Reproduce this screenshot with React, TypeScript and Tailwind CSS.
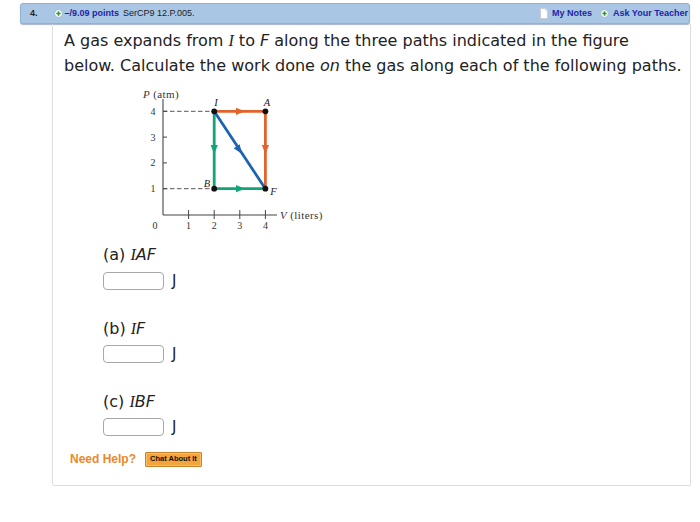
import React from "react";

const GreenPlus = () => (
  <span className="inline-flex items-center justify-center w-[9px] h-[9px] rounded-full bg-white border border-[#9bb7d2] shrink-0">
    <svg width="5" height="5" viewBox="0 0 5 5">
      <path d="M2.5 0.3 V4.7 M0.3 2.5 H4.7" stroke="#2e9a2e" strokeWidth="1.6" />
    </svg>
  </span>
);

const DocIcon = () => (
  <svg width="8" height="11" viewBox="0 0 8 11" className="shrink-0">
    <path d="M0.5 0.5 H5.5 L7.5 2.5 V10.5 H0.5 Z" fill="#fff" stroke="#c9c9c9" strokeWidth="0.8" />
    <path d="M5.5 0.5 V2.5 H7.5" fill="#eee" stroke="#c9c9c9" strokeWidth="0.6" />
  </svg>
);

const Figure = () => {
  const X = (v: number) => 32 + 25.6 * v;
  const Y = (p: number) => 130.5 - 25.8 * p;
  const orange = "#e2632b";
  const green = "#14a47a";
  const blue = "#1c63b0";
  const serif = "'Liberation Serif', 'DejaVu Serif', serif";
  const bAng = (Math.atan2(Y(1) - Y(4), X(4) - X(2)) * 180) / Math.PI;
  return (
    <svg width="200" height="150" viewBox="0 0 200 150" className="block">
      <line x1={32} y1={Y(4)} x2={X(2)} y2={Y(4)} stroke="#555" strokeWidth="1" strokeDasharray="4.5 2.5" />
      <line x1={32} y1={Y(1)} x2={X(2)} y2={Y(1)} stroke="#555" strokeWidth="1" strokeDasharray="4.5 2.5" />
      <line x1={32} y1={15} x2={32} y2={131} stroke="#444" strokeWidth="1.1" />
      <line x1={32} y1={131} x2={146} y2={131} stroke="#444" strokeWidth="1.1" />
      {[1, 2, 3, 4].map((p) => (
        <line key={"yt" + p} x1={32} y1={Y(p)} x2={36} y2={Y(p)} stroke="#444" strokeWidth="1" />
      ))}
      {[1, 2, 3, 4].map((v) => (
        <line key={"xt" + v} x1={X(v)} y1={126} x2={X(v)} y2={135} stroke="#444" strokeWidth="1" />
      ))}
      <text x={12} y={13.5} fontFamily={serif} fontSize="11" letterSpacing="0.4" fill="#333">
        <tspan fontStyle="italic">P</tspan> (atm)
      </text>
      {[1, 2, 3, 4].map((p) => (
        <text key={"yl" + p} x={22} y={Y(p) + 3.5} fontFamily={serif} fontSize="10" fill="#333" textAnchor="middle">
          {p}
        </text>
      ))}
      {[0, 1, 2, 3, 4].map((v) => (
        <text key={"xl" + v} x={v === 0 ? 24 : X(v)} y={144.5} fontFamily={serif} fontSize="10" fill="#333" textAnchor="middle">
          {v}
        </text>
      ))}
      <text x={149} y={135} fontFamily={serif} fontSize="11" letterSpacing="0.4" fill="#333">
        <tspan fontStyle="italic">V</tspan> (liters)
      </text>
      <polyline points={`${X(2)},${Y(4)} ${X(4)},${Y(4)} ${X(4)},${Y(1)}`} fill="none" stroke={orange} strokeWidth="2.8" />
      <polyline points={`${X(2)},${Y(4)} ${X(2)},${Y(1)} ${X(4)},${Y(1)}`} fill="none" stroke={green} strokeWidth="2.8" />
      <line x1={X(2)} y1={Y(4)} x2={X(4)} y2={Y(1)} stroke={blue} strokeWidth="2.8" />
      <polygon points="-5,-3.6 4,0 -5,3.6" fill={orange} transform={`translate(110,${Y(4)})`} />
      <polygon points="-5,-3.6 4,0 -5,3.6" fill={orange} transform={`translate(${X(4)},66) rotate(90)`} />
      <polygon points="-5,-3.6 4,0 -5,3.6" fill={green} transform={`translate(${X(2)},66) rotate(90)`} />
      <polygon points="-5,-3.6 4,0 -5,3.6" fill={green} transform={`translate(110,${Y(1)})`} />
      <polygon points="-5,-3.6 4,0 -5,3.6" fill={blue} transform={`translate(108.5,66.5) rotate(${bAng})`} />
      {[
        [X(2), Y(4)],
        [X(4), Y(4)],
        [X(2), Y(1)],
        [X(4), Y(1)],
      ].map(([cx, cy], i) => (
        <circle key={"pt" + i} cx={cx} cy={cy} r={2.9} fill="#111" />
      ))}
      <text x={85} y={21.5} fontFamily={serif} fontStyle="italic" fontSize="10.5" fill="#222" textAnchor="middle">I</text>
      <text x={136} y={21.5} fontFamily={serif} fontStyle="italic" fontSize="10.5" fill="#222" textAnchor="middle">A</text>
      <text x={76} y={103} fontFamily={serif} fontStyle="italic" fontSize="10.5" fill="#222" textAnchor="middle">B</text>
      <text x={142.5} y={110.5} fontFamily={serif} fontStyle="italic" fontSize="10.5" fill="#222" textAnchor="middle">F</text>
    </svg>
  );
};

const SerifI = () => (
  <span className="italic" style={{ fontFamily: "'Liberation Serif', 'DejaVu Serif', serif" }}>I</span>
);

const Answer = () => (
  <div className="flex items-center">
    <div className="w-[61px] h-[18px] rounded-[4px] border border-[#a8a8a8] bg-white" />
    <span className="ml-[8px] text-[15px] leading-[18px] text-[#222]">J</span>
  </div>
);

export default function App() {
  return (
    <div
      className="w-[700px] h-[522px] bg-white pt-[3px] pl-[20px]"
      style={{ fontFamily: "'DejaVu Sans', Verdana, sans-serif" }}
    >
      <div
        className="w-[670px] h-[21px] rounded-[3px] bg-[#a9c6e4] border border-[#8fb1d4] shadow-[0_1px_1px_rgba(60,90,130,0.45)] flex items-center text-[9px] leading-none"
        style={{ fontFamily: "'Liberation Sans', Arial, sans-serif" }}
      >
        <span className="ml-[9px] font-bold text-[#222]">4.</span>
        <span className="ml-[16px]"><GreenPlus /></span>
        <span className="ml-[2px] font-bold text-[#2323a8]">–/9.09 points</span>
        <span className="ml-[4px] text-[#222]">SerCP9 12.P.005.</span>
        <div className="ml-auto flex items-center mr-[1px]">
          <DocIcon />
          <span className="ml-[4px] font-bold text-[#2323a8]">My Notes</span>
          <span className="ml-[8px]"><GreenPlus /></span>
          <span className="ml-[4px] font-bold text-[#2323a8]">Ask Your Teacher</span>
        </div>
      </div>

      <div className="ml-[32px] w-[639px] h-[462px] border-l border-r border-b border-[#dedede] rounded-b-[2px]">
        <p className="pl-[11px] pt-[4px] text-[16px] leading-[25px] text-[#222] whitespace-nowrap">
          A gas expands from <SerifI /> to <span className="italic">F</span> along the three paths indicated in the figure
          <br />
          below. Calculate the work done <span className="italic">on</span> the gas along each of the following paths.
        </p>

        <div className="ml-[78px] mt-[6px]">
          <Figure />
        </div>

        <div className="pl-[50px] text-[16px] text-[#222]">
          <div className="mt-[11px] leading-[20px]">
            (a) <SerifI /><span className="italic">AF</span>
          </div>
          <div className="mt-[7px]">
            <Answer />
          </div>
          <div className="mt-[29px] leading-[20px]">
            (b) <SerifI /><span className="italic">F</span>
          </div>
          <div className="mt-[6px]">
            <Answer />
          </div>
          <div className="mt-[29px] leading-[20px]">
            (c) <SerifI /><span className="italic">BF</span>
          </div>
          <div className="mt-[6px]">
            <Answer />
          </div>
        </div>

        <div
          className="mt-[15px] ml-[17px] flex items-center"
          style={{ fontFamily: "'Liberation Sans', Arial, sans-serif" }}
        >
          <span className="text-[12px] leading-[16px] font-bold text-[#e8892b]">Need Help?</span>
          <span className="ml-[9px] h-[15px] px-[4px] flex items-center bg-[#f3a43a] border border-[#c9822c] rounded-[1px] text-[7.5px] font-bold text-[#111] shadow-[inset_0_0_0_1px_rgba(255,210,130,0.6)]">
            Chat About It
          </span>
        </div>
      </div>
    </div>
  );
}
